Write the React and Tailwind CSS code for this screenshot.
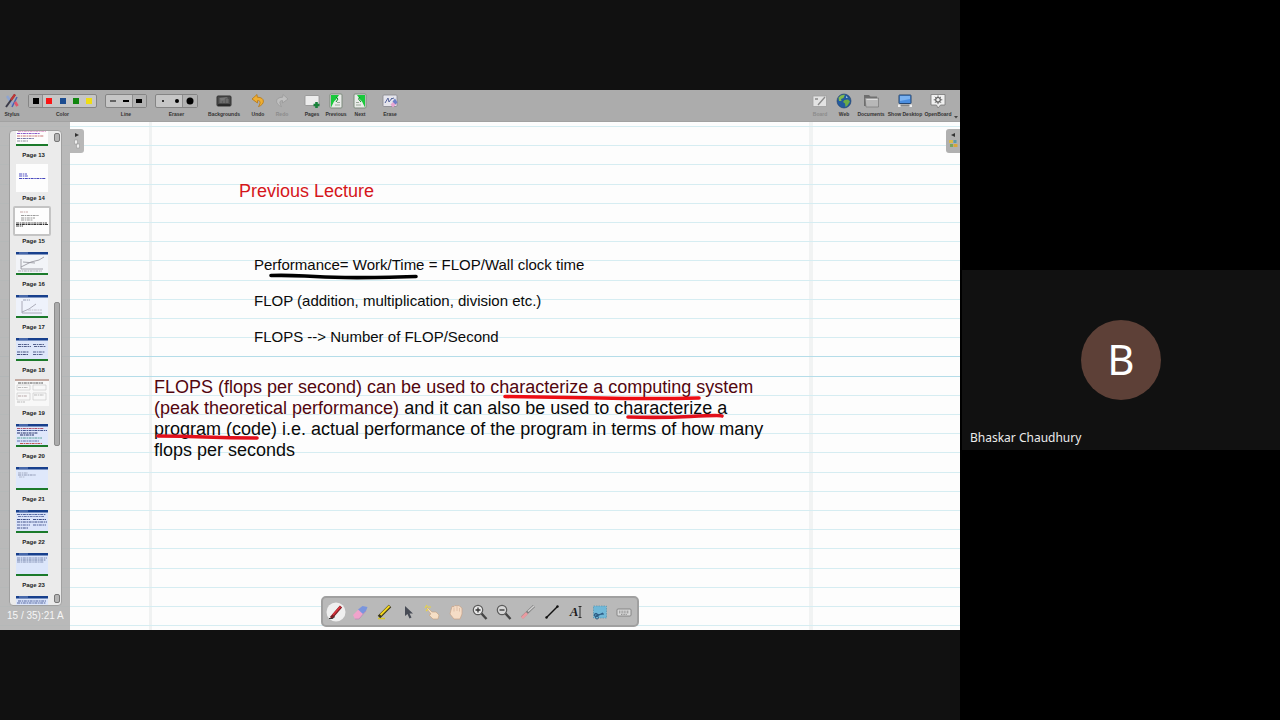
import React from "react";

const RULES = Array.from({ length: 27 }, (_, i) => 4 + i * 19.2);

function Paper() {
  return (
    <svg className="absolute inset-0 h-full w-full" aria-hidden="true">
      <rect width="100%" height="100%" fill="#fdfdfd" />
      <rect x="149" width="3" height="100%" fill="#f0f2f2" />
      <rect x="809" width="4" height="100%" fill="#f1f3f3" />
      {RULES.map((y, i) => (
        <line
          key={y}
          x1="0"
          x2="100%"
          y1={Math.round(y) + 0.5}
          y2={Math.round(y) + 0.5}
          stroke={i === 12 || i === 13 ? "#b5dde9" : "#d6edf2"}
        />
      ))}
    </svg>
  );
}

function Svg({ w = 16, h = 16, children, className = "" }) {
  return (
    <svg width={w} height={h} viewBox={`0 0 ${w} ${h}`} className={`shrink-0 ${className}`} aria-hidden="true" fill="none">
      {children}
    </svg>
  );
}

const icons = {
  stylus: (
    <Svg>
      <path d="M3 3l6 9" stroke="#8ea4d0" strokeWidth="2.5" />
      <path d="M2 14L11 1.500" stroke="#3a3a48" strokeWidth="2" />
      <path d="M7 7l4-5.500" stroke="#c03434" strokeWidth="2.200" />
      <path d="M8 14l5-10" stroke="#4c5fae" strokeWidth="1.6" />
      <path d="M11 9l2.500 4" stroke="#e0566a" strokeWidth="2.800" />
    </Svg>
  ),
  backgrounds: (
    <Svg>
      <rect x="1" y="3" width="14" height="10" rx="1" fill="#4b4b4b" stroke="#333" />
      <path d="M3 7h10M3 9h10M5 5v5M8 5v5M11 5v5" stroke="#8f8f8f" strokeWidth=".6" />
      <path d="M3 5l9-1-6 4z" fill="#777" />
      <path d="M2 12h12" stroke="#242424" strokeWidth="1.6" />
    </Svg>
  ),
  undo: (
    <Svg>
      <path d="M7 1.500L2 6l5.500 4V7.600c3-.2 3.500 2 1 6C15 11.500 15.500 4.200 7.300 4.200z" fill="#efae32" stroke="#b67713" strokeWidth=".8" />
    </Svg>
  ),
  redo: (
    <Svg>
      <path d="M9 1.500L14 6l-5.500 4V7.600c-3-.2-3.500 2-1 6C1 11.500 .5 4.200 8.700 4.200z" fill="#bfbfbf" stroke="#999" strokeWidth=".8" />
    </Svg>
  ),
  pages: (
    <Svg>
      <rect x="1" y="2.500" width="14" height="10" rx="1" fill="#ececec" stroke="#8f8f8f" strokeWidth=".8" />
      <path d="M12.500 9v6M9.500 12h6" stroke="#17813a" strokeWidth="2.6" />
    </Svg>
  ),
  previous: (
    <Svg>
      <rect x="2" y="1" width="12" height="14" rx="1" fill="#e9ece9" stroke="#7c8a7c" />
      <path d="M3 2h8L8 6.500l-2 2-3 6z" fill="#19c93b" />
      <path d="M8 4l2 2-2 3" stroke="#0f8a28" />
      <path d="M12 9.500H9M12 12H7" stroke="#9aa89a" />
    </Svg>
  ),
  next: (
    <Svg>
      <rect x="2" y="1" width="12" height="14" rx="1" fill="#e9ece9" stroke="#7c8a7c" />
      <path d="M13 2H5l3 4.500 2 2 3 6z" fill="#19c93b" />
      <path d="M8 4L6.500 6 9 9" stroke="#0f8a28" />
      <path d="M4 9.500h3M4 12h5" stroke="#9aa89a" />
    </Svg>
  ),
  erase: (
    <Svg>
      <rect x="1" y="2" width="14" height="11.500" rx="1" fill="#e5e5ec" stroke="#85858c" strokeWidth=".8" />
      <path d="M3 10l3-5 1 4 3-4M9 6l3-1" stroke="#56649b" />
      <path d="M8.500 11.500l4-4 2.500 3-4 4z" fill="#e8a5d0" />
      <path d="M10.500 8.500l2.500-3 2.500 4-2 2z" fill="#6c7fc8" />
    </Svg>
  ),
  board: (
    <Svg>
      <rect x="1" y="3" width="13.500" height="10.500" fill="#e3e3e3" stroke="#a0a0a0" strokeWidth=".8" />
      <path d="M6 12l7-8M3 6h3" stroke="#8b8b8b" strokeWidth="1.400" />
    </Svg>
  ),
  web: (
    <Svg>
      <circle cx="8" cy="8" r="7" fill="#235b9e" stroke="#1b3d6a" strokeWidth=".6" />
      <path d="M2.500 4.500Q5 1 9 1.800L7.500 5 5 6 5.500 8 3 8z" fill="#83ba4d" />
      <path d="M8.500 7l3.500-.5 2 2-2.500 4-2 1.500-.5-3.500-2-1.500z" fill="#6bab45" />
      <path d="M10 3l2 1.500-2 .5z" fill="#a7cde8" />
    </Svg>
  ),
  documents: (
    <Svg>
      <path d="M1 2h5l1.500 1.500H14V13H1z" fill="#6e6e6e" />
      <path d="M2 5h13.500v9H3z" fill="#b8b8b8" stroke="#777" strokeWidth=".7" />
      <path d="M3.500 6.500h11" stroke="#dcdcdc" />
    </Svg>
  ),
  desktop: (
    <Svg>
      <rect x="2" y="2" width="12" height="8.500" rx=".5" fill="#4b8ee0" stroke="#27466e" />
      <path d="M3 3h10v3L3 8z" fill="#7bb2f0" />
      <path d="M2 12.500h12" stroke="#888" />
      <rect x="1" y="11.500" width="2.500" height="2.500" fill="#eee" />
      <rect x="12.500" y="11.500" width="2.500" height="2.500" fill="#eee" />
    </Svg>
  ),
  openboard: (
    <Svg>
      <path d="M1 1.500h14v10.500H10.500L8 15 6.500 12H1z" fill="#f0f0f0" stroke="#777" strokeWidth=".8" />
      <circle cx="8" cy="6.800" r="2.300" stroke="#555" strokeWidth="1.100" />
      <path d="M8 2.500v2M8 9.200v2M3.700 6.800h2M10.300 6.800h2M5 3.800l1.400 1.400M9.600 8.400L11 9.800M11 3.800L9.600 5.200M6.400 8.400L5 9.800" stroke="#666" />
    </Svg>
  ),
};

function Tool({ icon, label, className = "w-6", faded }) {
  return (
    <button type="button" className={`flex shrink-0 flex-col items-center gap-px ${className}`}>
      {icons[icon]}
      <span className={`text-[5px] leading-[8px] font-bold whitespace-nowrap ${faded ? "text-[#8b8b8b]" : "text-[#333333]"}`}>{label}</span>
    </button>
  );
}

function Group({ label, className, items, active, draw }) {
  return (
    <div className={`flex shrink-0 flex-col items-center gap-[2px] pt-px ${className}`}>
      <div className="flex h-[14px] w-full overflow-hidden rounded-[2px] border border-[#858585] bg-[#c6c6c6]">
        {items.map((item, i) => (
          <button
            key={item}
            type="button"
            aria-label={`${label} ${i + 1}`}
            className={`flex flex-1 items-center justify-center ${i === active ? "bg-[#b2b2b2] outline outline-[#8e8e8e]" : ""}`}
          >
            {draw(item)}
          </button>
        ))}
      </div>
      <span className="text-[5px] leading-[8px] font-bold text-[#333333]">{label}</span>
    </div>
  );
}

function Toolbar() {
  return (
    <header className="flex h-8 shrink-0 items-start justify-between border-b border-[#a2a2a2] bg-[#acacac] pt-[3px]">
      <div className="flex items-start">
        <Tool icon="stylus" label="Stylus" />
        <Group
          label="Color"
          className="ml-1 w-[69px]"
          active={0}
          items={["#000000", "#fa1414", "#1c4c90", "#11860f", "#efdd13"]}
          draw={(c) => (
            <Svg w={6} h={6}>
              <rect width="6" height="6" fill={c} />
            </Svg>
          )}
        />
        <Group
          label="Line"
          className="ml-2 w-[42px]"
          active={2}
          items={[1, 2, 4]}
          draw={(t) => (
            <Svg w={6} h={6}>
              <rect y={3 - t / 2} width="6" height={t} fill="#000" />
            </Svg>
          )}
        />
        <Group
          label="Eraser"
          className="ml-2 w-[43px]"
          active={2}
          items={[2, 4, 7]}
          draw={(d) => (
            <Svg w={8} h={8}>
              <circle cx="4" cy="4" r={d / 2} fill="#000" />
            </Svg>
          )}
        />
        <Tool icon="backgrounds" label="Backgrounds" className="ml-2 w-9" />
        <Tool icon="undo" label="Undo" className="ml-1 w-6" />
        <Tool icon="redo" label="Redo" className="w-6" faded />
        <Tool icon="pages" label="Pages" className="ml-1.5 w-6" />
        <Tool icon="previous" label="Previous" />
        <Tool icon="next" label="Next" />
        <Tool icon="erase" label="Erase" className="ml-1.5 w-6" />
      </div>
      <div className="flex items-start">
        <Tool icon="board" label="Board" faded />
        <Tool icon="web" label="Web" />
        <Tool icon="documents" label="Documents" className="w-[30px]" />
        <Tool icon="desktop" label="Show Desktop" className="w-[38px]" />
        <Tool icon="openboard" label="OpenBoard" className="w-7" />
        <Svg w={8} h={28}>
          <path d="M2 23h4l-2 2.500z" fill="#444" />
        </Svg>
      </div>
    </header>
  );
}

const squiggle = (y, x1, x2, c) => (
  <path key={`${y}-${x1}`} d={`M${x1} ${y}H${x2}`} stroke={c} strokeWidth="1" strokeDasharray="3 .7 1.500 .6" />
);

function slide(fill, body) {
  return (
    <Svg w={32} h={23}>
      <rect width="32" height="23" fill={fill} />
      <rect width="32" height="2.500" fill="#173f8c" />
      <path d="M3 1h9" stroke="#8fa6d8" strokeWidth=".8" />
      {body}
      <rect y="21" width="32" height="2" fill="#1b7a2b" />
    </Svg>
  );
}

const PAGES = [
  {
    name: "Page 13",
    art: slide("#fdfdfd", [squiggle(8, 2, 30, "#d35fae"), squiggle(10.5, 1, 24, "#8a5bc8"), squiggle(13, 1, 28, "#c97575"), squiggle(15.5, 1, 18, "#7777a8"), squiggle(18, 1, 12, "#8c8c9c")]),
  },
  {
    name: "Page 14",
    art: (
      <Svg w={32} h={28}>
        <rect width="32" height="28" fill="#fdfdfd" />
        {squiggle(10, 3, 11, "#5252c4")}
        {squiggle(12, 3, 12, "#5252c4")}
        {squiggle(14.5, 3, 30, "#4747bd")}
      </Svg>
    ),
  },
  {
    name: "Page 15",
    selected: true,
    art: (
      <Svg w={34} h={26}>
        <rect width="34" height="26" fill="#fdfdfd" />
        {squiggle(4, 5, 13, "#c9a9a9")}
        {squiggle(7.5, 6, 24, "#999")}
        {squiggle(10, 6, 20, "#999")}
        {squiggle(12, 6, 18, "#999")}
        {squiggle(15, 1, 32, "#444")}
        {squiggle(16.5, 1, 33, "#333")}
        {squiggle(18, 1, 8, "#444")}
      </Svg>
    ),
  },
  {
    name: "Page 16",
    art: slide("#f2f4f8", [
      <path key="a" d="M5 7v10h22M5 15l10-5 8-2 5-3M7 10l12 1" stroke="#8f8f98" strokeWidth=".8" />,
      squiggle(19, 2, 26, "#a5a5af"),
    ]),
  },
  {
    name: "Page 17",
    art: slide("#eef2fb", [
      <path key="a" d="M6 6v12h20M6 17l7-3 7-5" stroke="#9a9aa8" strokeWidth=".8" />,
      squiggle(5, 7, 14, "#999fb4"),
      squiggle(15, 12, 26, "#c4c4ce"),
    ]),
  },
  {
    name: "Page 18",
    art: slide("#dde6fa", [squiggle(6.5, 2, 13, "#53608c"), squiggle(8.5, 2, 15, "#53608c"), squiggle(6.5, 17, 28, "#53608c"), squiggle(8.5, 18, 30, "#53608c"), squiggle(14, 1, 13, "#424e7c"), squiggle(16.5, 1, 12, "#424e7c"), squiggle(14, 17, 29, "#53608c"), squiggle(16.5, 17, 27, "#53608c")]),
  },
  {
    name: "Page 19",
    art: (
      <Svg w={34} h={27}>
        <rect width="34" height="27" fill="#f8f8f8" />
        <rect width="34" height="2" fill="#c3aaa2" />
        {squiggle(4, 3, 28, "#555")}
        <path d="M2 6h13v5H2zM18 6h13v5H18zM2 14h13v7H2zM18 14h13v7H18z" stroke="#c2c2c2" strokeWidth=".6" />
        {squiggle(8.5, 3, 13, "#bbb")}
        {squiggle(17, 3, 12, "#b5a5a5")}
        {squiggle(16, 19, 29, "#bbb")}
        {squiggle(23, 2, 10, "#bbb")}
      </Svg>
    ),
  },
  {
    name: "Page 20",
    art: slide("#dfe7fb", [squiggle(4.5, 1, 28, "#b05266"), squiggle(6.5, 1, 31, "#44548f"), squiggle(9, 1, 22, "#222f66"), squiggle(11, 4, 18, "#222f66"), squiggle(14, 1, 26, "#529e93"), squiggle(17, 1, 23, "#5b6eaa"), squiggle(19.5, 4, 26, "#c25555")]),
  },
  {
    name: "Page 21",
    art: slide("#dfe8fb", [squiggle(6, 2, 12, "#a1a9bf"), squiggle(8, 2, 20, "#8d96b2"), squiggle(10, 3, 9, "#b1b9cd")]),
  },
  {
    name: "Page 22",
    art: slide("#dce5fb", [squiggle(4.5, 1, 30, "#52659f"), squiggle(6.5, 2, 28, "#6b7aac"), squiggle(9.5, 1, 14, "#3f4f86"), squiggle(9.5, 17, 30, "#3f4f86"), squiggle(12, 1, 31, "#3f4f86"), squiggle(15, 1, 14, "#52619a"), squiggle(15, 17, 30, "#52619a"), squiggle(18, 1, 12, "#3f4f86")]),
  },
  {
    name: "Page 23",
    art: slide("#dce6fb", [squiggle(5, 1, 31, "#7b89b3"), squiggle(7, 1, 30, "#67779f"), squiggle(9, 1, 28, "#8794b8")]),
  },
];

function Sidebar() {
  return (
    <aside className="relative flex w-[70px] shrink-0 flex-col bg-[#b1b1b1]/90 pt-2 pl-[9px]">
      <nav aria-label="Pages" className="flex min-h-0 w-[53px] flex-1 overflow-hidden rounded-[4px] border border-[#a0a0a0] bg-[#ebebeb]">
        <ul className="-mt-3 w-11 shrink-0">
          {PAGES.map((p) => (
            <li key={p.name}>
              <button type="button" className="flex h-[43px] w-full flex-col items-center">
                <span className="flex h-[31px] items-center">
                  <span className={p.selected ? "rounded-[2px] border-2 border-[#c4c4c4]" : ""}>{p.art}</span>
                </span>
                <span className="pl-[3px] text-[6px] leading-[11px] font-bold whitespace-nowrap text-[#1c1c1c]">{p.name}</span>
              </button>
            </li>
          ))}
          <li className="flex justify-center pt-1">
            {slide("#dce6fb", [squiggle(5, 2, 30, "#52659f"), squiggle(7, 1, 30, "#52659f"), squiggle(10, 2, 28, "#6b7aac")])}
          </li>
        </ul>
        <div className="flex flex-1 flex-col justify-between py-[2px] pr-px">
          <div className="h-[9px] rounded-[2px] border border-[#777777] bg-[#b5b5b5]" />
          <div className="mt-3 h-[144px] rounded-[2px] border border-[#8a8a8a] bg-[#ababab]" />
          <div className="h-[9px] rounded-[2px] border border-[#777777] bg-[#b5b5b5]" />
        </div>
      </nav>
      <p className="-ml-0.5 flex h-6 items-center pb-1 text-[10px] leading-[16px] whitespace-nowrap text-[#f6f6f6]">15 / 35):21 A</p>
    </aside>
  );
}

const paletteTools = [
  ["Pen", <Svg w={20} h={20}><circle cx="10" cy="10" r="9.500" fill="#efefef" /><path d="M5 16L15 4.500" stroke="#7b1b22" strokeWidth="3" /><path d="M7 13L14.500 4.500" stroke="#d8333c" strokeWidth="1.800" /><path d="M3 16.500q4 1 6-2" stroke="#333" /></Svg>],
  ["Eraser", <Svg><path d="M1 11l7-7 6-1-1 4-6 8H3z" fill="#f0a3cb" /><path d="M6 5.500L10.500 2l5 1-1.500 4-3 3z" fill="#7a95dd" /><path d="M3 15h4l7-8" stroke="#b98bb5" strokeWidth=".8" /></Svg>],
  ["Marker", <Svg><path d="M2 14.500h7" stroke="#d6c62a" strokeWidth="1.500" /><path d="M3 13L14 2" stroke="#3a3516" strokeWidth="3.600" /><path d="M4.500 11L13.500 2" stroke="#f3d51e" strokeWidth="2" /></Svg>],
  ["Selector", <Svg><path d="M5 2v10l2.500-2 2 4.500 2-1-2-4H13z" fill="#474b55" /></Svg>],
  ["Interact", <Svg><path d="M3 3l5 5 4 0 3 3-1 4H9L5 11l2-1-4-5z" fill="#f6dfc6" stroke="#c59f7c" strokeWidth=".6" /><path d="M1 4l2-3M3 3h4M2 7l2-2" stroke="#e8d441" strokeWidth="1.200" /></Svg>],
  ["Hand", <Svg><path d="M3 6l1-3.500 2 0 1-1 2 .5 2-.5 1.500 1.500 1.500 1v6l-2 5H6L2 10z" fill="#f5dcc6" stroke="#c7a287" strokeWidth=".7" /><path d="M6 3.500v4M9 3v4M11.500 4v3.500" stroke="#d0ad92" strokeWidth=".6" /></Svg>],
  ["Zoom in", <Svg><path d="M9.500 9.500L14.500 15" stroke="#454545" strokeWidth="2.400" /><circle cx="6" cy="6" r="4.700" fill="#e8e8e8" stroke="#5b5b5b" strokeWidth="1.200" /><path d="M6 3.500v5M3.500 6h5" stroke="#333" strokeWidth="1.300" /></Svg>],
  ["Zoom out", <Svg><path d="M9.500 9.500L14.500 15" stroke="#454545" strokeWidth="2.400" /><circle cx="6" cy="6" r="4.700" fill="#d5d5d5" stroke="#5b5b5b" strokeWidth="1.200" /><path d="M3.500 6h5" stroke="#333" strokeWidth="1.300" /></Svg>],
  ["Laser pointer", <Svg><path d="M2 13.500L14 2" stroke="#7c7c7c" strokeWidth="3" /><path d="M8 7.500L14 2" stroke="#d2d2d2" strokeWidth="1.600" /><path d="M2 14l5-5" stroke="#e99aa0" strokeWidth="3" /></Svg>],
  ["Line", <Svg><path d="M2.500 13.500l11-11" stroke="#111" strokeWidth="1.400" /><circle cx="2.500" cy="13.500" r="1.200" fill="#111" /><circle cx="13.500" cy="2.500" r="1.200" fill="#111" /></Svg>],
  ["Text", <span className="flex h-4 items-center font-['Liberation_Serif',serif] text-[13px] leading-4 text-[#1b1b1b]"><i className="font-bold">A</i><Svg w={4} h={14}><path d="M.5 1.500h3M2 1.500v11M.5 12.500h3" stroke="#222" strokeWidth=".9" /></Svg></span>],
  ["Capture", <Svg><rect x="1.500" y="2" width="13" height="12" fill="#70b8d8" stroke="#5692ae" strokeWidth=".7" strokeDasharray="1.500 1" /><path d="M3 11l9-1M3 13l8-4" stroke="#2d5d85" strokeWidth="1.200" /><circle cx="4" cy="11" r="1.700" stroke="#2d5d85" /><circle cx="5" cy="13.500" r="1.500" stroke="#2d5d85" /></Svg>],
  ["Keyboard", <Svg><rect x="1" y="5" width="14" height="7" rx="1" fill="#d9d9d9" stroke="#777" strokeWidth=".8" /><path d="M3 7.200h10M3 8.800h10M5 10.400h6" stroke="#777" strokeWidth=".8" strokeDasharray="1 .6" /></Svg>],
];

function Palette() {
  return (
    <div role="toolbar" aria-label="Drawing tools" className="absolute bottom-[3px] left-1/2 flex h-[31px] -translate-x-1/2 items-center rounded-[5px] border-2 border-[#a0a0a0] bg-[#b9b9b9] px-px">
      {paletteTools.map(([name, art]) => (
        <button key={name} type="button" aria-label={name} className="flex w-6 items-center justify-center">
          {art}
        </button>
      ))}
    </div>
  );
}

function Annotations() {
  return (
    <svg className="pointer-events-none absolute inset-0 h-full w-full" fill="none" strokeLinecap="round" aria-hidden="true">
      <path d="M201 153.500Q215 153 235 154T275 155.500T346 154.500" stroke="#000" strokeWidth="3.600" />
      <path d="M435 274.500Q480 275 530 276T629 276" stroke="#ee0d14" strokeWidth="3.600" />
      <path d="M558 295Q590 296 620 294.500T652 294" stroke="#e2101c" strokeWidth="3.600" />
      <path d="M88 314Q110 314 135 315T187 316" stroke="#e2101c" strokeWidth="3.600" />
    </svg>
  );
}

function Whiteboard() {
  return (
    <main className="relative flex min-w-0 flex-1 flex-col">
      <div className="absolute top-[7px] left-0 flex h-6 w-[14px] flex-col items-center rounded-r-[3px] bg-[#b8b8b8]">
        <Svg w={14} h={24}>
          <path d="M5 4l4 2-4 2z" fill="#333" />
          <path d="M4.500 11h3v4h-3zM6.500 15h3v4h-3z" fill="#eee" stroke="#999" strokeWidth=".6" />
        </Svg>
      </div>
      <div className="absolute top-[7px] right-0 flex h-6 w-[14px] flex-col items-center rounded-l-[3px] bg-[#b0b0b0]">
        <Svg w={14} h={24}>
          <path d="M9 4L5 6l4 2z" fill="#333" />
          <rect x="3" y="11" width="4" height="3" fill="#d8b94c" />
          <rect x="7.500" y="11" width="3" height="3" fill="#5c9aa8" />
          <rect x="4" y="15" width="3" height="3" fill="#79a35b" />
          <rect x="7.500" y="15" width="4" height="3" fill="#d8a73b" />
        </Svg>
      </div>
      <div className="relative pt-[59px] pl-[84px]">
        <h1 className="pl-[85px] text-[18px] leading-[21px] text-[#d5161b]">Previous Lecture</h1>
        <div className="mt-[45px] pl-[100px] text-[15px] leading-[36px] text-[#0a0a0a]">
          <p>Performance= Work/Time = FLOP/Wall clock time</p>
          <p>FLOP (addition, multiplication, division etc.)</p>
          <p>FLOPS --&gt; Number of FLOP/Second</p>
        </div>
        <p className="mt-[22px] max-w-[620px] text-[18px] leading-[21px] text-[#0a0a0a]">
          <span className="text-[#52060f]">FLOPS (flops per second) can be used to characterize a computing system (peak theoretical performance)</span> and it can also be used to characterize a program (code) i.e. actual performance of the program in terms of how many flops per seconds
        </p>
      </div>
      <Annotations />
    </main>
  );
}

export default function App() {
  return (
    <div className="flex min-h-screen bg-black font-['Liberation_Sans',Arial,sans-serif]">
      <section aria-label="Shared screen" className="flex w-3/4 shrink-0 flex-col justify-center bg-[#111111]">
        <div className="relative flex aspect-video flex-col overflow-hidden">
          <Toolbar />
          <div className="relative flex min-h-0 flex-1">
            <Paper />
            <Sidebar />
            <Whiteboard />
          </div>
          <Palette />
        </div>
      </section>
      <section aria-label="Participants" className="flex min-w-0 flex-1 flex-col justify-center pl-[2px]">
        <div className="relative flex h-[180px] items-center justify-center bg-[#111111]">
          <div className="flex size-20 items-center justify-center rounded-full bg-[#5d4037] pb-[2px] font-['Noto_Sans',sans-serif] text-[42px] leading-none text-white">B</div>
          <p className="absolute bottom-1 left-2 font-['Noto_Sans',sans-serif] text-[12px] leading-4 text-[#ececec]">Bhaskar Chaudhury</p>
        </div>
      </section>
    </div>
  );
}
